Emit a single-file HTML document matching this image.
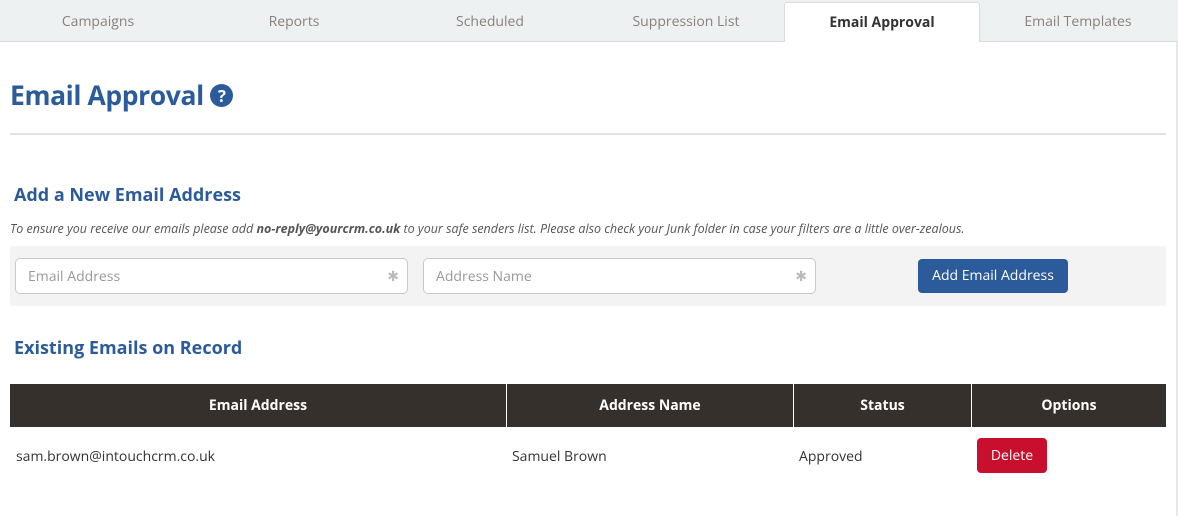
<!DOCTYPE html>
<html><head><style>
*{box-sizing:border-box;margin:0;padding:0}
body{width:1178px;height:516px;overflow:hidden;background:#fff;font-family:"Open Sans","Liberation Sans",sans-serif;position:relative}
.tabs{position:absolute;left:0;top:0;width:1178px;height:42px;background:#eef1f2;border-bottom:1px solid #d9dcdd}
.tab{position:absolute;top:0;width:196px;height:42px;line-height:44px;text-align:center;font-size:14px;color:#8a8079}
.tab.active{top:2px;height:40px;line-height:40px;background:#fff;border:1px solid #d9dcdd;border-bottom:none;border-radius:3px 3px 0 0;color:#333;font-weight:bold}
.rb{position:absolute;right:0;top:42px;width:2px;height:474px;background:#e8e8e8}
h1{position:absolute;left:10px;top:77px;font-size:26.5px;color:#2b5b9a;font-weight:bold;letter-spacing:-0.4px}
.q{display:inline-block;width:23px;height:23px;border-radius:50%;background:#2b5b9a;color:#fff;font-size:17px;text-align:center;line-height:23px;vertical-align:3px;margin-left:0}
.hr{position:absolute;left:10px;top:133px;width:1156px;height:2px;background:#e2e2e2}
h2{position:absolute;left:14px;font-size:18px;color:#2b5b9a;font-weight:bold}
.note{position:absolute;left:10px;top:220px;font-size:12.5px;font-style:italic;color:#555;white-space:nowrap}
.panel{position:absolute;left:10px;top:246px;width:1156px;height:60px;background:#f3f3f3;border-radius:3px}
.inp{position:absolute;top:258px;height:36px;border:1px solid #c9c9c9;border-radius:5px;background:#fff;font-size:14px;color:#999;padding:8px 12px}
.inp span{position:absolute;right:8px;top:8px;color:#bbb}
.btn{position:absolute;left:918px;top:259px;width:150px;height:34px;background:#2b5b9a;border-radius:4px;color:#fff;font-size:14px;text-align:center;line-height:34px}
.th{position:absolute;top:384px;height:43px;background:#35302c;color:#fff;font-weight:bold;font-size:14px;text-align:center;line-height:43px}
.td{position:absolute;top:447px;font-size:14px;color:#333}
.del{position:absolute;left:977px;top:438px;width:70px;height:35px;background:#c8102e;border-radius:4px;color:#fff;font-size:14px;text-align:center;line-height:35px}
</style></head><body>
<div class="tabs">
<div class="tab" style="left:0">Campaigns</div>
<div class="tab" style="left:196px">Reports</div>
<div class="tab" style="left:392px">Scheduled</div>
<div class="tab" style="left:588px">Suppression List</div>
<div class="tab active" style="left:784px">Email Approval</div>
<div class="tab" style="left:980px">Email Templates</div>
</div>
<div class="rb"></div>
<h1>Email Approval <span class="q">?</span></h1>
<div class="hr"></div>
<h2 style="top:183px">Add a New Email Address</h2>
<div class="note">To ensure you receive our emails please add <b>no-reply@yourcrm.co.uk</b> to your safe senders list. Please also check your Junk folder in case your filters are a little over-zealous.</div>
<div class="panel"></div>
<div class="inp" style="left:15px;width:393px">Email Address<span>✱</span></div>
<div class="inp" style="left:423px;width:393px">Address Name<span>✱</span></div>
<div class="btn">Add Email Address</div>
<h2 style="top:336px">Existing Emails on Record</h2>
<div class="th" style="left:10px;width:496px">Email Address</div>
<div class="th" style="left:507px;width:286px">Address Name</div>
<div class="th" style="left:794px;width:177px">Status</div>
<div class="th" style="left:972px;width:194px">Options</div>
<div class="td" style="left:16px">sam.brown@intouchcrm.co.uk</div>
<div class="td" style="left:512px">Samuel Brown</div>
<div class="td" style="left:799px">Approved</div>
<div class="del">Delete</div>
</body></html>
